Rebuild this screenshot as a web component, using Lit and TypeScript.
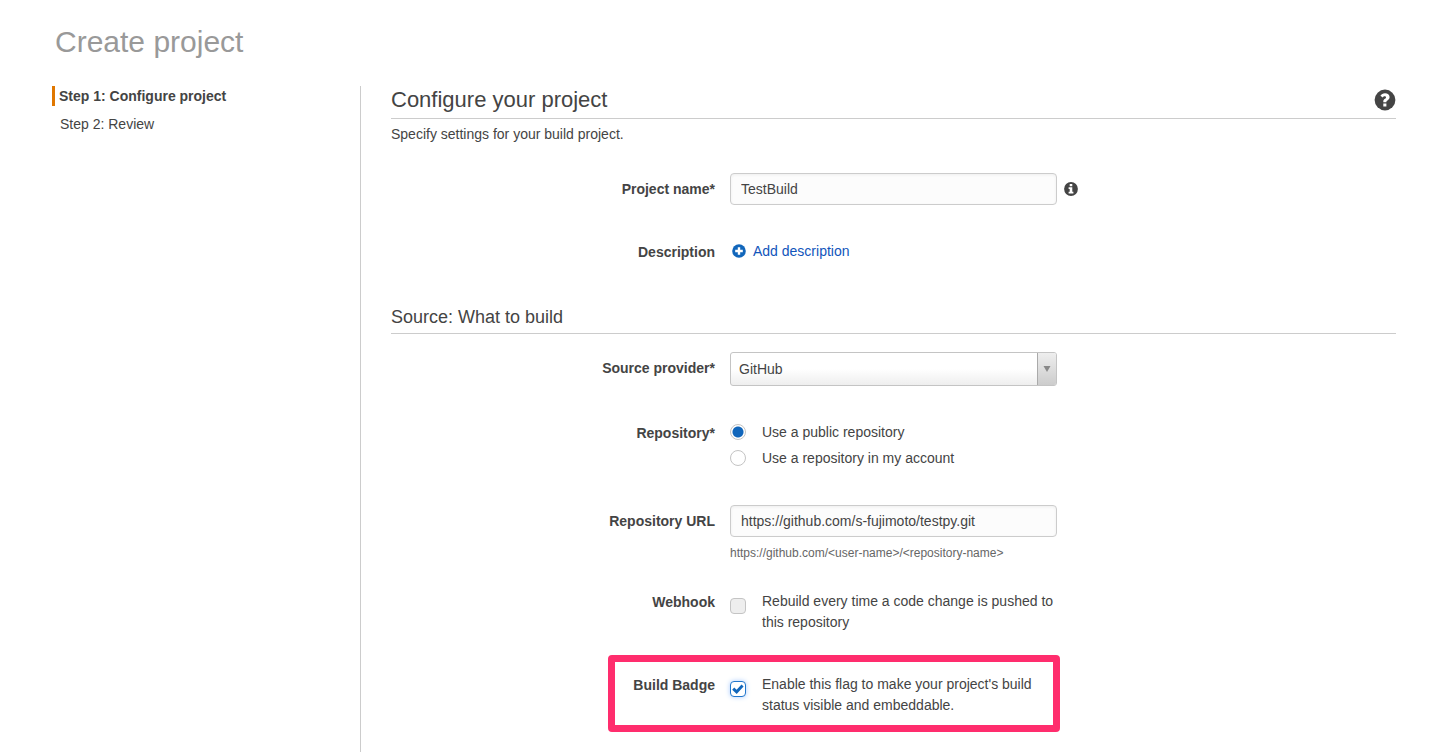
import { LitElement, html, css, svg } from "lit";
import { customElement, state } from "lit/decorators.js";

const plusIcon = html`<svg class="icon-plus" viewBox="0 0 14 14" aria-hidden="true">
  <circle cx="7" cy="7" r="6.8" fill="#1166bb" />
  ${svg`<path d="M5.8 3.2h2.4v2.6h2.6v2.4H8.2v2.6H5.8V8.2H3.2V5.8h2.6z" fill="#fff" />`}
</svg>`;

const infoIcon = html`<svg class="icon-info" viewBox="0 0 14 14" aria-hidden="true">
  <circle cx="7" cy="7" r="6.9" fill="#444" />
  ${svg`<path d="M5.7 2h2.6v2.2H5.7zM4.6 5.2h3.7v4.5h1.1v1.9H4.6V9.7h1.1V7.1H4.6z" fill="#fff" />`}
</svg>`;

const helpIcon = html`<svg class="icon-help" viewBox="0 0 22 22" aria-hidden="true">
  <circle cx="11" cy="11" r="10.4" fill="#444" />
  ${svg`<path d="M9.3 13.3v-.8c0-1.3.6-2 1.6-2.7.8-.5 1.1-.8 1.1-1.4 0-.7-.5-1.1-1.3-1.1-.9 0-1.4.5-2 1.2L6.4 6.7C7.4 5.1 8.9 4.2 11 4.2c2.6 0 4.6 1.4 4.6 3.8 0 1.8-1 2.7-2.1 3.4-.8.5-1.1.8-1.1 1.4v.5zM9.3 14.5h3.1v3H9.3z" fill="#fff" />`}
</svg>`;

@customElement("app-root")
export class AppRoot extends LitElement {
  @state() private publicRepo = true;
  @state() private badge = true;

  static styles = css`
    :host {
      display: block;
      font-family: "Helvetica Neue", "Liberation Sans", Arial, sans-serif;
      font-size: 14px;
      line-height: 20px;
      color: #444;
    }
    .page {
      box-sizing: border-box;
      min-height: 100vh;
      padding: 22px 40px 0 52px;
      background: #fff;
      display: flex;
      flex-direction: column;
    }
    h1, h2, h3, p, ol { margin: 0; padding: 0; font-weight: normal; }
    h1 {
      font-size: 30px;
      line-height: 40px;
      padding-left: 3px;
      margin-bottom: 24px;
      color: #999;
    }
    .columns { flex: 1; display: flex; }
    .steps {
      flex: none;
      box-sizing: border-box;
      width: 309px;
      border-right: 1px solid #ccc;
      list-style: none;
      display: flex;
      flex-direction: column;
      gap: 8px;
    }
    .step { padding-left: 8px; }
    .step.current {
      padding-left: 4px;
      border-left: 3px solid #e07700;
      font-weight: bold;
    }
    main { flex: 1; min-width: 0; padding-left: 30px; }
    .title {
      display: flex;
      align-items: center;
      justify-content: space-between;
      padding-bottom: 4px;
      border-bottom: 1px solid #ccc;
    }
    h2 { font-size: 22px; line-height: 28px; }
    h3 {
      margin: 44px 0 18px;
      padding-bottom: 5px;
      border-bottom: 1px solid #ccc;
      font-size: 18px;
      line-height: 22px;
    }
    .intro { margin: 5px 0 29px; }
    button {
      display: flex;
      align-items: center;
      padding: 0;
      border: 0;
      background: none;
      font: inherit;
      color: #1155bb;
      cursor: pointer;
    }
    .row {
      position: relative;
      display: grid;
      grid-template-columns: 324px minmax(0, 1fr);
      column-gap: 15px;
    }
    .row > .name { text-align: right; font-weight: bold; }
    .row.field > .name { padding-top: 6px; }
    .row.lines > .name { padding-top: 1px; }
    .row.repo > .name { padding-top: 4px; }
    .inline { display: flex; align-items: center; gap: 7px; }
    .lines .inline { align-items: flex-start; }
    input[type="text"] {
      box-sizing: border-box;
      width: 327px;
      height: 32px;
      padding: 0 10px;
      border: 1px solid #ccc;
      border-radius: 4px;
      background: #fcfcfc;
      box-shadow: inset 0 1px 3px #eee;
      font: inherit;
      color: #444;
    }
    .select { position: relative; width: 327px; height: 34px; }
    select {
      appearance: none;
      box-sizing: border-box;
      display: block;
      width: 100%;
      height: 100%;
      padding: 0 28px 0 8px;
      border: 1px solid #c4c4c4;
      border-radius: 3px;
      background: linear-gradient(#fff 50%, #eee);
      font: inherit;
      color: #444;
    }
    .arrow {
      position: absolute;
      inset: 1px 1px 1px auto;
      width: 18px;
      border-left: 1px solid #aaa;
      border-radius: 0 2px 2px 0;
      background: linear-gradient(#eee, #ccc);
      display: grid;
      place-items: center;
      pointer-events: none;
    }
    .arrow svg { width: 8px; height: 6px; }
    .add { gap: 7px; margin-left: 2px; }
    .icon-plus, .icon-info { width: 14px; height: 14px; display: block; }
    .icon-help { width: 22px; height: 22px; display: block; }
    .choice { display: flex; gap: 16px; width: 327px; }
    .choice.radio { align-items: center; height: 26px; }
    .choice.check { line-height: 21px; }
    .text { flex: 1; min-width: 0; }
    input[type="radio"], input[type="checkbox"] {
      appearance: none;
      box-sizing: border-box;
      flex: none;
      width: 16px;
      height: 16px;
      margin: 0;
      border: 1px solid #c4c4c4;
      background: #fff;
    }
    input[type="radio"] { border-radius: 50%; }
    input[type="radio"]:checked {
      background: radial-gradient(circle, #1166bb 5px, #fff 6px);
    }
    input[type="checkbox"] { display: block; border-radius: 4px; }
    input[type="checkbox"]:disabled { background: #eee; }
    input[type="checkbox"]:checked {
      border-color: #2277cc;
      box-shadow: 0 0 5px #aaccff;
    }
    .box { position: relative; flex: none; width: 16px; padding-top: 7px; }
    .tick {
      position: absolute;
      left: 0;
      top: 7px;
      width: 16px;
      height: 16px;
      pointer-events: none;
    }
    .after-name { margin-top: 36px; }
    .repo { margin: 33px 0 34px; }
    .hint { margin-top: 8px; font-size: 12px; line-height: 16px; color: #666; }
    .webhook { margin: 30px 0 41px; }
    .highlight {
      position: absolute;
      box-sizing: border-box;
      left: 217px;
      top: -19px;
      bottom: -16px;
      width: 452px;
      border: 7px solid #ff2d6d;
      border-radius: 4px;
      pointer-events: none;
    }
  `;

  render() {
    return html`
      <div class="page">
        <h1>Create project</h1>
        <div class="columns">
          <ol class="steps">
            <li class="step current" aria-current="step">Step 1: Configure project</li>
            <li class="step">Step 2: Review</li>
          </ol>
          <main>
            <div class="title">
              <h2>Configure your project</h2>
              <button type="button" aria-label="Help">${helpIcon}</button>
            </div>
            <p class="intro">Specify settings for your build project.</p>

            <div class="row field">
              <label class="name" for="name">Project name*</label>
              <div class="inline">
                <input id="name" type="text" value="TestBuild" />
                <button type="button" aria-label="Info">${infoIcon}</button>
              </div>
            </div>

            <div class="row lines after-name">
              <span class="name">Description</span>
              <div class="inline">
                <button class="add" type="button">${plusIcon}<span>Add description</span></button>
              </div>
            </div>

            <h3>Source: What to build</h3>

            <div class="row field">
              <label class="name" for="provider">Source provider*</label>
              <div class="select">
                <select id="provider"><option>GitHub</option></select>
                <span class="arrow">
                  <svg viewBox="0 0 8 6" aria-hidden="true"><path d="M.5 0h7L4 6z" fill="#888" /></svg>
                </span>
              </div>
            </div>

            <div class="row repo" role="radiogroup" aria-labelledby="repo-label">
              <span class="name" id="repo-label">Repository*</span>
              <div>
                <label class="choice radio">
                  <input type="radio" name="repo" .checked=${this.publicRepo}
                    @change=${() => (this.publicRepo = true)} />
                  <span class="text">Use a public repository</span>
                </label>
                <label class="choice radio">
                  <input type="radio" name="repo" .checked=${!this.publicRepo}
                    @change=${() => (this.publicRepo = false)} />
                  <span class="text">Use a repository in my account</span>
                </label>
              </div>
            </div>

            <div class="row field">
              <label class="name" for="url">Repository URL</label>
              <div>
                <input id="url" type="text" value="https://github.com/s-fujimoto/testpy.git" />
                <p class="hint">https://github.com/&lt;user-name&gt;/&lt;repository-name&gt;</p>
              </div>
            </div>

            <div class="row lines webhook">
              <label class="name" for="webhook">Webhook</label>
              <div class="choice check">
                <span class="box"><input id="webhook" type="checkbox" disabled /></span>
                <label class="text" for="webhook">Rebuild every time a code change is pushed to this repository</label>
              </div>
            </div>

            <div class="row lines">
              <label class="name" for="badge">Build Badge</label>
              <div class="choice check">
                <span class="box">
                  <input id="badge" type="checkbox" .checked=${this.badge}
                    @change=${(e: Event) => (this.badge = (e.target as HTMLInputElement).checked)} />
                  ${this.badge
                    ? html`<svg class="tick" viewBox="0 0 16 16" aria-hidden="true">
                        <path d="M2.2 8.7l2-2.1 2.4 2.2 4.9-5.4 2.1 2-6.9 7.5z" fill="#1166bb" />
                      </svg>`
                    : null}
                </span>
                <label class="text" for="badge">Enable this flag to make your project's build status visible and embeddable.</label>
              </div>
              <div class="highlight"></div>
            </div>
          </main>
        </div>
      </div>
    `;
  }
}
